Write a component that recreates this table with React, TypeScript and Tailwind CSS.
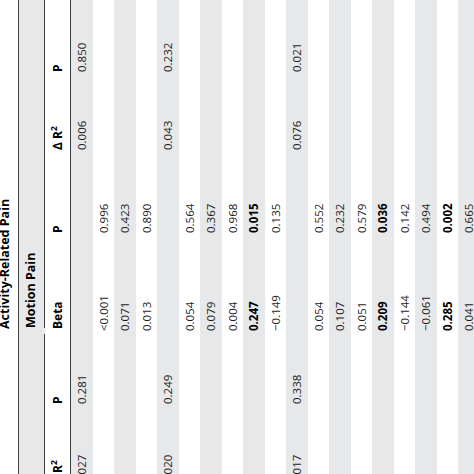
import React from "react";

type Row = {
  head?: boolean;
  bold?: boolean;
  fdR?: string;
  fP?: string;
  beta?: string;
  p?: string;
  dR?: string;
  p2?: string;
};

const rows: Row[] = [
  { head: true, fdR: "0.027", fP: "0.281", dR: "0.006", p2: "0.850" },
  { beta: "<0.001", p: "0.996" },
  { beta: "0.071", p: "0.423" },
  { beta: "0.013", p: "0.890" },
  { head: true, fdR: "0.020", fP: "0.249", dR: "0.043", p2: "0.232" },
  { beta: "0.054", p: "0.564" },
  { beta: "0.079", p: "0.367" },
  { beta: "0.004", p: "0.968" },
  { beta: "0.247", p: "0.015", bold: true },
  { beta: "\u22120.149", p: "0.135" },
  { head: true, fdR: "0.017", fP: "0.338", dR: "0.076", p2: "0.021" },
  { beta: "0.054", p: "0.552" },
  { beta: "0.107", p: "0.232" },
  { beta: "0.051", p: "0.579" },
  { beta: "0.209", p: "0.036", bold: true },
  { beta: "\u22120.144", p: "0.142" },
  { beta: "\u22120.061", p: "0.494" },
  { beta: "0.285", p: "0.002", bold: true },
  { beta: "0.041", p: "0.665" },
];

// the table is laid out upright, then turned a quarter to the left like the scan
const cols = "grid grid-cols-[10px_80px_73px_98px_83px_78px_72px]";

const DeltaR = () => (
  <span>
    Δ R<sup className="text-[8.5px]">2</sup>
  </span>
);

export default function App() {
  return (
    <div className="w-[474px] h-[474px] overflow-hidden bg-white">
      <div className="w-[494px] origin-top-left -rotate-90 translate-y-[494px] font-['Open_Sans',sans-serif] text-[#1c1c1c]">
        {/* title */}
        <div className={`${cols} h-[19px] border-b border-[#404040] items-start`}>
          <div className="col-start-4 col-span-4 pl-[2px] text-[12.5px] font-bold leading-[10px] text-black whitespace-nowrap">
            Activity-Related Pain
          </div>
        </div>

        {/* group row */}
        <div className={`${cols} h-[26px] bg-[#e6e8e9]`}>
          <div className="col-span-3 mr-[3px] border-b border-[#404040]" />
          <div className="col-span-4 ml-[3px] border-b border-[#404040] flex items-center text-[12.5px] font-bold text-black whitespace-nowrap">
            Motion Pain
          </div>
        </div>

        {/* column heads */}
        <div className={`${cols} h-[26px] border-b border-[#404040] items-center text-[12px] font-bold text-black`}>
          <div />
          <div>
            <DeltaR />
          </div>
          <div>P</div>
          <div className="pl-[2px]">Beta</div>
          <div>P</div>
          <div>
            <DeltaR />
          </div>
          <div>P</div>
        </div>

        {rows.map((r, i) => (
          <div
            key={i}
            className={`${cols} h-[21.5px] items-center text-[11.5px] ${
              i % 2 === 0 ? "bg-[#e6e8e9]" : "bg-white"
            } ${r.bold ? "font-bold text-black" : ""}`}
          >
            <div />
            <div>{r.fdR}</div>
            <div>{r.fP}</div>
            <div>{r.beta}</div>
            <div>{r.p}</div>
            <div>{r.dR}</div>
            <div>{r.p2}</div>
          </div>
        ))}
      </div>
    </div>
  );
}
